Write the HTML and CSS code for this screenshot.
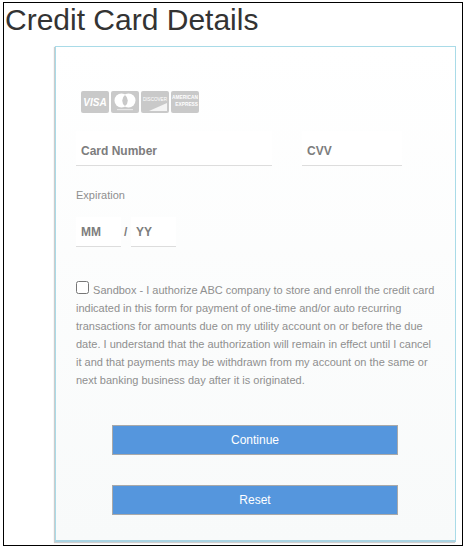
FILE: index.html
```html
<!DOCTYPE html>
<html lang="en">
<head>
    <meta charset="UTF-8">
    <title>Credit Card Details</title>
    <link rel="stylesheet" href="styles.css">
</head>
<body>
    <div class="frame">
        <h1>Credit Card Details</h1>
        <form class="card-form">
            <div class="card-icons">
                <svg class="card-icon" viewBox="0 0 28 22">
                    <rect width="28" height="22" rx="2" fill="#c9c9c9"/>
                    <text x="14" y="15" class="visa-text">VISA</text>
                </svg>
                <svg class="card-icon" viewBox="0 0 28 22">
                    <rect width="28" height="22" rx="2" fill="#c9c9c9"/>
                    <circle cx="10.5" cy="9.5" r="7" fill="#fff"/>
                    <circle cx="17.5" cy="9.5" r="7" fill="#fff"/>
                    <path d="M14 3.9a7 7 0 0 1 0 11.2a7 7 0 0 1 0-11.2z" fill="#c9c9c9"/>
                    <rect x="6" y="18" width="16" height="1.2" fill="#e6e6e6"/>
                </svg>
                <svg class="card-icon" viewBox="0 0 28 22">
                    <rect width="28" height="22" rx="2" fill="#c9c9c9"/>
                    <text x="14" y="10" class="discover-text">DISCOVER</text>
                    <path d="M8 20L26 12V20z" fill="#f4f4f4"/>
                </svg>
                <svg class="card-icon" viewBox="0 0 28 22">
                    <rect width="28" height="22" rx="2" fill="#c9c9c9"/>
                    <text x="14" y="8" class="amex-text">AMERICAN</text>
                    <text x="27" y="15" class="amex-text amex-right">EXPRESS</text>
                </svg>
            </div>

            <div class="row">
                <div class="field field-number">Card Number</div>
                <div class="field field-cvv">CVV</div>
            </div>

            <div class="exp-label">Expiration</div>
            <div class="row exp-row">
                <div class="field field-month">MM</div>
                <span class="slash">/</span>
                <div class="field field-year">YY</div>
            </div>

            <p class="terms">
                <input type="checkbox" class="terms-check">
                Sandbox - I authorize ABC company to store and enroll the credit card indicated in this form for payment of one-time and/or auto recurring transactions for amounts due on my utility account on or before the due date. I understand that the authorization will remain in effect until I cancel it and that payments may be withdrawn from my account on the same or next banking business day after it is originated.
            </p>

            <button type="button" class="btn">Continue</button>
            <button type="button" class="btn">Reset</button>
        </form>
    </div>
</body>
</html>
```

FILE: styles.css
```css
body {
    margin: 0;
    font-family: "Liberation Sans", Arial, sans-serif;
    background-color: #fff;
}

.frame {
    box-sizing: border-box;
    width: 460px;
    height: 544px;
    margin: 2px 0 0 3px;
    border: 1px solid #000;
    overflow: hidden;
}

h1 {
    margin: 0;
    font-size: 30px;
    font-weight: 400;
    line-height: 34px;
    color: #333;
    padding-left: 1px;
}

.card-form {
    box-sizing: border-box;
    width: 401px;
    height: 496px;
    margin: 9px 0 0 51px;
    padding: 44px 20px 0 20px;
    border: 1px solid #a9dbe8;
    border-bottom: 2px solid #a9d3e2;
    box-shadow: -1px 1px 1px #ccc;
    background: linear-gradient(#fff, #f8fafa);
}

.card-icons {
    display: flex;
    gap: 2px;
    padding-left: 5px;
}

.card-icon {
    width: 28px;
    height: 22px;
}

.card-icon text {
    font-family: "Liberation Sans", Arial, sans-serif;
    fill: #fff;
    text-anchor: middle;
}

.card-icon .visa-text {
    font-size: 10px;
    font-weight: 700;
    font-style: italic;
}

.card-icon .discover-text {
    font-size: 4.6px;
}

.card-icon .amex-text {
    font-size: 4.8px;
    font-weight: 700;
}

.card-icon .amex-right {
    text-anchor: end;
}

.row {
    display: flex;
    margin-top: 18px;
}

.field {
    box-sizing: border-box;
    height: 35px;
    padding: 3px 5px 0 5px;
    line-height: 34px;
    font-size: 12px;
    font-weight: 700;
    color: #7d7d7d;
    background-color: #fff;
    border-bottom: 1px solid #ddd;
}

.field-number {
    width: 196px;
}

.field-cvv {
    width: 100px;
    margin-left: 30px;
}

.exp-label {
    margin-top: 22px;
    font-size: 11px;
    line-height: 14px;
    color: #8f8f8f;
}

.exp-row {
    margin-top: 15px;
}

.field-month,
.field-year {
    width: 45px;
    height: 30px;
    padding-top: 0;
    line-height: 30px;
}

.slash {
    width: 7px;
    margin-left: 3px;
    line-height: 30px;
    font-size: 12px;
    font-weight: 700;
    color: #7d7d7d;
}

.terms {
    margin: 34px 0 0 0;
    width: 362px;
    font-size: 11px;
    line-height: 18px;
    color: #8f8f8f;
}

.terms-check {
    width: 13px;
    height: 13px;
    margin: 0 1px 0 0;
    vertical-align: 0;
}

.btn {
    display: block;
    box-sizing: border-box;
    width: 286px;
    height: 30px;
    margin: 36px 0 0 36px;
    padding: 0;
    font-family: inherit;
    font-size: 12px;
    color: #fff;
    background-color: #5596dd;
    border: 1px solid #a9a9a9;
}

.btn + .btn {
    margin-top: 30px;
}
```
